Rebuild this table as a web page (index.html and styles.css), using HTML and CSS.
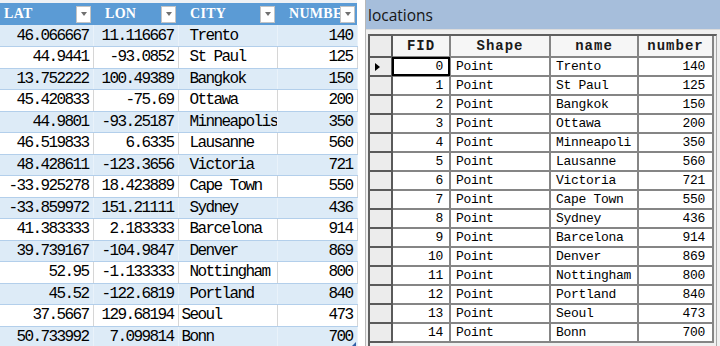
FILE: index.html
```html
<!DOCTYPE html>
<html>
<head>
<meta charset="utf-8">
<link rel="stylesheet" href="styles.css">
</head>
<body>
<div class="page">
  <div class="sheet">
    <table class="xl">
      <colgroup><col class="c1"><col class="c2"><col class="c3"><col class="c4"></colgroup>
      <thead>
        <tr>
          <th class="first"><div class="hd"><span class="ht">LAT</span><span class="dd"></span></div></th>
          <th><div class="hd"><span class="ht">LON</span><span class="dd"></span></div></th>
          <th><div class="hd"><span class="ht">CITY</span><span class="dd"></span></div></th>
          <th><div class="hd"><span class="ht">NUMBER</span><span class="dd"></span></div></th>
        </tr>
      </thead>
      <tbody>
        <tr class="b"><td>46.066667</td><td>11.116667</td><td class="city"> Trento</td><td>140</td></tr>
        <tr><td>44.9441</td><td>-93.0852</td><td class="city"> St Paul</td><td>125</td></tr>
        <tr class="b"><td>13.752222</td><td>100.49389</td><td class="city"> Bangkok</td><td>150</td></tr>
        <tr><td>45.420833</td><td>-75.69</td><td class="city"> Ottawa</td><td>200</td></tr>
        <tr class="b"><td>44.9801</td><td>-93.25187</td><td class="city"> Minneapolis</td><td>350</td></tr>
        <tr><td>46.519833</td><td>6.6335</td><td class="city"> Lausanne</td><td>560</td></tr>
        <tr class="b"><td>48.428611</td><td>-123.3656</td><td class="city"> Victoria</td><td>721</td></tr>
        <tr><td>-33.925278</td><td>18.423889</td><td class="city"> Cape Town</td><td>550</td></tr>
        <tr class="b"><td>-33.859972</td><td>151.21111</td><td class="city"> Sydney</td><td>436</td></tr>
        <tr><td>41.383333</td><td>2.183333</td><td class="city"> Barcelona</td><td>914</td></tr>
        <tr class="b"><td>39.739167</td><td>-104.9847</td><td class="city"> Denver</td><td>869</td></tr>
        <tr><td>52.95</td><td>-1.133333</td><td class="city"> Nottingham</td><td>800</td></tr>
        <tr class="b"><td>45.52</td><td>-122.6819</td><td class="city"> Portland</td><td>840</td></tr>
        <tr><td>37.5667</td><td>129.68194</td><td class="city">Seoul</td><td>473</td></tr>
        <tr class="b last"><td>50.733992</td><td>7.099814</td><td class="city">Bonn</td><td class="corner">700</td></tr>
      </tbody>
    </table>
  </div>
  <div class="win">
    <div class="title">locations</div>
    <div class="body">
      <div class="gridbox">
        <table class="grid">
          <colgroup><col class="g0"><col class="g1"><col class="g2"><col class="g3"><col class="g4"></colgroup>
          <thead>
            <tr><th class="sel"></th><th>FID</th><th>Shape</th><th>name</th><th>number</th></tr>
          </thead>
          <tbody>
            <tr><td class="sel"><span class="ptr"></span></td><td class="n focus">0</td><td>Point</td><td>Trento</td><td class="n">140</td></tr>
            <tr><td class="sel"></td><td class="n">1</td><td>Point</td><td>St Paul</td><td class="n">125</td></tr>
            <tr><td class="sel"></td><td class="n">2</td><td>Point</td><td>Bangkok</td><td class="n">150</td></tr>
            <tr><td class="sel"></td><td class="n">3</td><td>Point</td><td>Ottawa</td><td class="n">200</td></tr>
            <tr><td class="sel"></td><td class="n">4</td><td>Point</td><td>Minneapoli</td><td class="n">350</td></tr>
            <tr><td class="sel"></td><td class="n">5</td><td>Point</td><td>Lausanne</td><td class="n">560</td></tr>
            <tr><td class="sel"></td><td class="n">6</td><td>Point</td><td>Victoria</td><td class="n">721</td></tr>
            <tr><td class="sel"></td><td class="n">7</td><td>Point</td><td>Cape Town</td><td class="n">550</td></tr>
            <tr><td class="sel"></td><td class="n">8</td><td>Point</td><td>Sydney</td><td class="n">436</td></tr>
            <tr><td class="sel"></td><td class="n">9</td><td>Point</td><td>Barcelona</td><td class="n">914</td></tr>
            <tr><td class="sel"></td><td class="n">10</td><td>Point</td><td>Denver</td><td class="n">869</td></tr>
            <tr><td class="sel"></td><td class="n">11</td><td>Point</td><td>Nottingham</td><td class="n">800</td></tr>
            <tr><td class="sel"></td><td class="n">12</td><td>Point</td><td>Portland</td><td class="n">840</td></tr>
            <tr><td class="sel"></td><td class="n">13</td><td>Point</td><td>Seoul</td><td class="n">473</td></tr>
            <tr><td class="sel"></td><td class="n">14</td><td>Point</td><td>Bonn</td><td class="n">700</td></tr>
          </tbody>
        </table>
      </div>
    </div>
  </div>
</div>
</body>
</html>
```
FILE: styles.css
```css
html, body { margin: 0; padding: 0; background: #fff; }
.page { display: flex; width: 720px; height: 346px; overflow: hidden; background: #fff; }

/* ---------- Excel sheet ---------- */
.sheet { width: 357px; flex: none; }
.xl {
  border-collapse: collapse;
  table-layout: fixed;
  width: 357px;
  font-family: "Liberation Mono", monospace;
  font-size: 16px;
  letter-spacing: -1.6px;
  color: #000;
}
.xl col.c1 { width: 93px; }
.xl col.c2 { width: 85px; }
.xl col.c3 { width: 99px; }
.xl col.c4 { width: 80px; }
.xl thead th {
  padding: 0;
  background: #5b9bd5;
  border-top: 3px solid #eef1f5;
  height: 22px;
}
.hd { display: flex; align-items: center; height: 22px; padding: 0 2px 0 12px; }
.first .hd { padding-left: 4px; }
.ht {
  flex: 1; min-width: 0; overflow: hidden; white-space: nowrap;
  font-family: "Liberation Serif", serif; font-weight: bold; font-size: 14px;
  letter-spacing: 0.3px; color: #fff; text-align: left;
}
.dd {
  flex: none; width: 15px; height: 17px; box-sizing: border-box;
  background: #fff; border: 1px solid #c4c4c4;
  display: flex; align-items: center; justify-content: center;
}
.dd::after {
  content: ""; width: 0; height: 0;
  border-left: 3.5px solid transparent; border-right: 3.5px solid transparent;
  border-top: 4px solid #707070;
}
.xl tbody tr { height: 21.5px; }
.xl tbody td {
  padding: 0 4px;
  text-align: right;
  white-space: pre;
  overflow: hidden;
  border-bottom: 1px solid #b3cfeb;
  border-right: 1px solid #d6d6d6;
  line-height: 20px;
}
.xl tbody tr.b td { background: #ddebf7; border-right-color: #e9f2fa; }
.xl td.city { text-align: left; padding-left: 3px; }
.xl td.corner { position: relative; }
.xl td.corner::after {
  content: ""; position: absolute; right: 1px; bottom: 1px;
  width: 0; height: 0;
  border-left: 4px solid transparent; border-bottom: 4px solid #2f5fa8;
}

/* ---------- ArcMap attribute window ---------- */
.win {
  flex: 1; margin-left: 8px;
  display: flex; flex-direction: column;
  border-left: 1px solid #b8b8b8;
}
.title {
  height: 29px; flex: none;
  background: #a6bedb;
  display: flex; align-items: center;
  padding-left: 2px;
  font-family: "Open Sans", "Noto Sans", sans-serif;
  font-size: 15.5px; color: #151515;
}
.body {
  flex: 1;
  background: #f0f0f0;
  border-top: 1px solid #dcdcdc;
  padding: 4px 3px 0 2px;
}
.gridbox {
  height: 100%;
  box-sizing: border-box;
  border-left: 2px solid #5f5f5f;
  border-top: 2px solid #5f5f5f;
  border-right: 1px solid #a8a8a8;
  background: #f0f0f0;
}
.grid {
  border-collapse: collapse;
  table-layout: fixed;
  width: 343px;
  font-family: "Liberation Mono", monospace;
  font-size: 13px;
  letter-spacing: -0.3px;
  color: #000;
}
.grid col.g0 { width: 22px; }
.grid col.g1 { width: 58px; }
.grid col.g2 { width: 100px; }
.grid col.g3 { width: 88px; }
.grid col.g4 { width: 75px; }
.grid th {
  height: 20px; padding: 0;
  background: #f6f6f6;
  border: 2px solid #858585;
  border-top: none;
  font-weight: bold; font-size: 14px; letter-spacing: 1px;
  color: #1a1a1a;
  text-align: center;
}
.grid tbody tr { height: 19px; }
.grid td {
  padding: 0 5px;
  background: #fff;
  border: 2px solid #858585;
  white-space: nowrap; overflow: hidden;
  text-align: left;
  line-height: 15px;
}
.grid td.n { text-align: right; padding-right: 6px; }
.grid td:last-child.n { padding-right: 7px; }
.grid .sel {
  background: #ececec;
  border-color: #5a5a5a;
  padding: 0;
}
.grid th.sel { border-left: none; }
.grid td.sel { border-left: none; }
.grid td.focus { outline: 2px solid #000; outline-offset: -2px; }
.ptr {
  display: block; width: 0; height: 0; margin-left: 5px;
  border-top: 4px solid transparent; border-bottom: 4px solid transparent;
  border-left: 5px solid #000;
}
```
